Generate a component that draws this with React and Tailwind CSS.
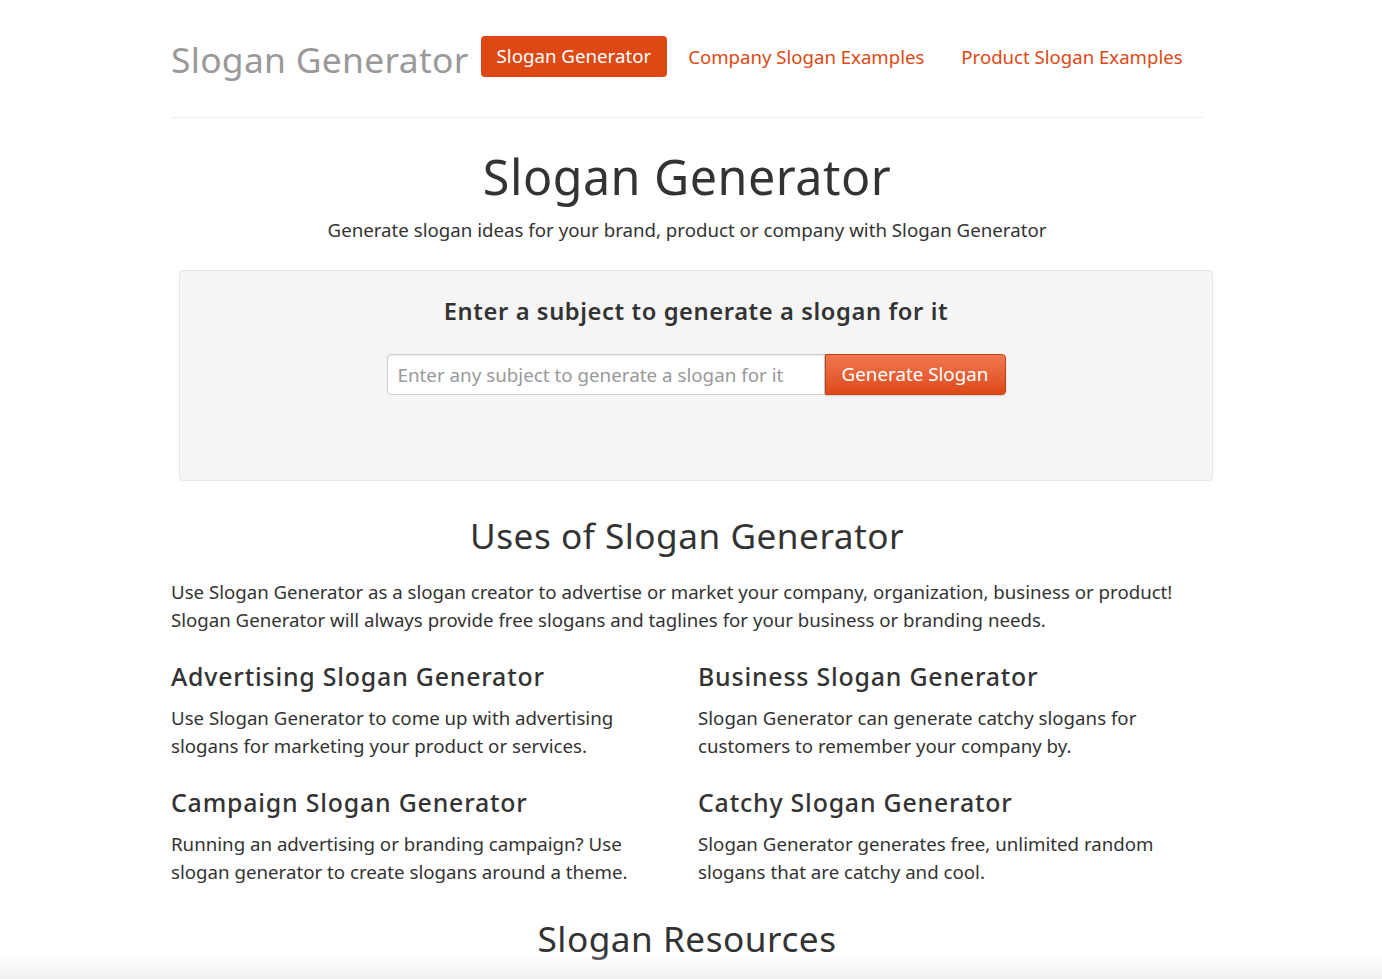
import React from 'react';

const ORANGE = '#dd4814';

const USES = [
  {
    title: 'Advertising Slogan Generator',
    lines: ['Use Slogan Generator to come up with advertising', 'slogans for marketing your product or services.'],
  },
  {
    title: 'Business Slogan Generator',
    lines: ['Slogan Generator can generate catchy slogans for', 'customers to remember your company by.'],
  },
  {
    title: 'Campaign Slogan Generator',
    lines: ['Running an advertising or branding campaign? Use', 'slogan generator to create slogans around a theme.'],
  },
  {
    title: 'Catchy Slogan Generator',
    lines: ['Slogan Generator generates free, unlimited random', 'slogans that are catchy and cool.'],
  },
];

export default function App() {
  return (
    <div className="min-h-screen bg-white text-[#333] font-['Noto_Sans','Open_Sans',sans-serif] relative">
      <div className="ml-[171px] w-[1032px]">

        {/* Header */}
        <header className="pt-[36px] pb-[40px] border-b border-[#eee] flex items-center">
          <span className="text-[35.4px] leading-[41px] text-[#999] mr-[12px] tracking-[0.3px] translate-y-[3px]">Slogan Generator</span>
          <nav className="flex items-center gap-[5px]">
            <a className="h-[41px] px-[16px] flex items-center rounded-[4px] text-white text-[18.7px]" style={{ background: ORANGE }}>
              Slogan Generator
            </a>
            <a className="h-[41px] px-[16px] flex items-center text-[18.6px] text-[#dd4814]">Company Slogan Examples</a>
            <a className="h-[41px] px-[16px] flex items-center text-[18.6px] text-[#dd4814]">Product Slogan Examples</a>
          </nav>
        </header>

        {/* Hero */}
        <div className="text-center pt-[28px]">
          <h1 className="text-[48.4px] leading-[60px] font-normal tracking-[0.5px]">Slogan Generator</h1>
          <p className="text-[18.7px] leading-[28px] mt-[10px]">Generate slogan ideas for your brand, product or company with Slogan Generator</p>
        </div>

        {/* Well */}
        <div className="ml-[8px] mr-[-10px] mt-[26px] h-[211px] bg-[#f5f5f5] border border-[#e3e3e3] rounded-[4px] pt-[24px] flex flex-col items-center">
          <h3 className="text-[23.7px] leading-[32px] font-semibold tracking-[0.6px]">Enter a subject to generate a slogan for it</h3>
          <div className="flex mt-[27px]">
            <input
              className="w-[438px] h-[41px] bg-white border border-[#ccc] rounded-l-[4px] px-[10px] text-[18.8px] outline-none placeholder:text-[#999] shadow-[inset_0_1px_1px_rgba(0,0,0,0.075)]"
              placeholder="Enter any subject to generate a slogan for it"
            />
            <button className="w-[181px] h-[41px] rounded-r-[4px] text-white text-[18.8px] bg-gradient-to-b from-[#f07850] to-[#dd4814] border border-[#c54113] shadow-[0_1px_2px_rgba(0,0,0,0.15)]">
              Generate Slogan
            </button>
          </div>
        </div>

        {/* Uses */}
        <h2 className="text-center text-[35.2px] leading-[44px] mt-[32px] tracking-[0.5px]">Uses of Slogan Generator</h2>
        <p className="text-[18.65px] leading-[28px] mt-[21px]">
          Use Slogan Generator as a slogan creator to advertise or market your company, organization, business or product!
          <br />
          Slogan Generator will always provide free slogans and taglines for your business or branding needs.
        </p>

        <div className="grid grid-cols-[527px_1fr] mt-[26px]">
          {USES.map((u) => (
            <div key={u.title} className="mb-[26px]">
              <h3 className="text-[24.9px] leading-[32px] font-medium tracking-[0.8px]">{u.title}</h3>
              <p className="text-[18.7px] leading-[28px] mt-[12px]">
                {u.lines[0]}
                <br />
                {u.lines[1]}
              </p>
            </div>
          ))}
        </div>

        <h2 className="text-center text-[35.2px] leading-[44px] mt-[4px] tracking-[0.5px]">Slogan Resources</h2>
        <div className="h-[60px]" />
      </div>

      {/* bottom fade */}
      <div className="fixed left-0 right-0 bottom-0 h-[26px] bg-gradient-to-b from-white/0 to-[#f0f0f0] pointer-events-none" />
    </div>
  );
}
